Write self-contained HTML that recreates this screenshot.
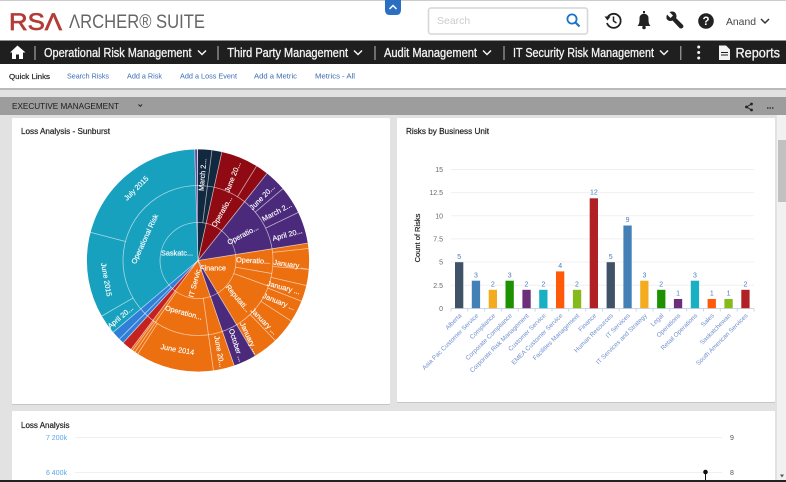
<!DOCTYPE html>
<html>
<head>
<meta charset="utf-8">
<style>
html,body{margin:0;padding:0;width:786px;height:482px;overflow:hidden;background:#e2e2e2}
svg{display:block;position:absolute;left:0;top:0;filter:blur(.3px);font-family:"Liberation Sans",sans-serif}
.nav{fill:#f4f4f4;stroke:#f4f4f4;stroke-width:.3;font-size:12.5px}
.ql{fill:#3a6db3;font-size:7.5px}
.s text{fill:#fff;stroke:#fff;stroke-width:.15;font-size:7.3px;text-anchor:middle}
.yl{fill:#666;font-size:7px;text-anchor:end}
.v{fill:#4a7cc4;font-size:7px;text-anchor:middle}
.xl{fill:#6f8fcf;font-size:6.3px;text-anchor:end}
.chev{fill:none;stroke:#f4f4f4;stroke-width:1.5}
.sep{stroke:#bbb;stroke-width:1}
.w circle{fill:none;stroke-width:111}
.thin path{stroke:#fff;stroke-opacity:.62;stroke-width:.8;fill:none}
.tt{fill:#222;stroke:#222;stroke-width:.2;font-size:8px}
</style>
</head>
<body>
<svg width="786" height="482" viewBox="0 0 786 482" xmlns="http://www.w3.org/2000/svg">
<!-- header -->
<rect x="0" y="0" width="786" height="41" fill="#fff"/>
<rect x="0" y="0" width="786" height="1" fill="#ccc"/>
<text x="9" y="30" font-size="24" fill="#b23c37" stroke="#b23c37" stroke-width=".7" textLength="53" lengthAdjust="spacingAndGlyphs">RSΛ</text>
<text x="69" y="28" font-size="19" fill="#666" textLength="136" lengthAdjust="spacingAndGlyphs">ΛRCHER® SUITE</text>
<path d="M385 0h16v10q0 5-5 5h-6q-5 0-5-5z" fill="#2b6fc2"/>
<path d="M389.500 9l3.500-3.500 3.500 3.500" fill="none" stroke="#fff" stroke-width="1.500"/>
<rect x="428.500" y="8" width="159" height="26" rx="2.500" fill="#fff" stroke="#d6d6d6" stroke-width="1.500"/>
<text x="437" y="24" font-size="10.500" fill="#ccc">Search</text>
<circle cx="572" cy="19" r="4.600" fill="none" stroke="#1b72c6" stroke-width="1.800"/>
<path d="M575.500 22.500l4 4" stroke="#1b72c6" stroke-width="2.200"/>
<!-- history -->
<path d="M607.500 17.500A7 7 0 1 1 607 23" fill="none" stroke="#222" stroke-width="1.800"/>
<path d="M604.500 16.500h6l-3 4z" fill="#222"/>
<path d="M613.500 16.500v4.500l3 2" fill="none" stroke="#222" stroke-width="1.500"/>
<!-- bell -->
<path d="M637.500 26q2-2 2-6v-2q0-3.500 4.500-4.500 4.500 1 4.500 4.500v2q0 4 2 6z" fill="#222"/>
<path d="M644 13v-2" stroke="#222" stroke-width="2"/>
<circle cx="644" cy="27.500" r="1.800" fill="#222"/>
<!-- wrench -->
<path d="M667 14.500l3.500 3.500 2.500-2.500-3.500-3.500q5-1.500 6.500 2 1 2.500 0 4l7 7q1 2-.5 3t-3 0l-7-7.500q-2 1-4.200 0-3-1.500-1.300-6z" fill="#222"/>
<!-- help -->
<circle cx="706" cy="21" r="7.800" fill="#222"/>
<text x="706" y="25" font-size="11.500" font-weight="bold" fill="#fff" text-anchor="middle">?</text>
<text x="726" y="25" font-size="10.500" fill="#444" textLength="30" lengthAdjust="spacingAndGlyphs">Anand</text>
<path d="M761 19l4 4 4-4" fill="none" stroke="#333" stroke-width="1.500"/>
<!-- nav -->
<rect x="0" y="40.500" width="786" height="23.500" fill="#1f1f1f"/>
<path d="M10 52.500L17.500 45.500 25.500 52.500h-2.500v6.500h-4v-4.500h-3v4.500h-4v-6.500z" fill="#fff"/>
<path class="sep" d="M35 46v14M218 46v14M375 46v14M504 46v14M680.800 46v14"/>
<text class="nav" x="44" y="57" textLength="147.500" lengthAdjust="spacingAndGlyphs">Operational Risk Management</text>
<path class="chev" d="M198 50.500l4 4 4-4"/>
<text class="nav" x="227.300" y="57" textLength="120.700" lengthAdjust="spacingAndGlyphs">Third Party Management</text>
<path class="chev" d="M354 50.500l4 4 4-4"/>
<text class="nav" x="384" y="57" textLength="93" lengthAdjust="spacingAndGlyphs">Audit Management</text>
<path class="chev" d="M483 50.500l4 4 4-4"/>
<text class="nav" x="513" y="57" textLength="141" lengthAdjust="spacingAndGlyphs">IT Security Risk Management</text>
<path class="chev" d="M660 50.500l4 4 4-4"/>
<circle cx="698.700" cy="47" r="1.500" fill="#f4f4f4"/><circle cx="698.700" cy="52.500" r="1.500" fill="#f4f4f4"/><circle cx="698.700" cy="58" r="1.500" fill="#f4f4f4"/>
<path d="M719 45.500h7l4 4v10.500h-11z" fill="#f4f4f4"/>
<path d="M721 52.500h7M721 55h7" stroke="#1f1f1f" stroke-width="1"/>
<text class="nav" x="735.500" y="57.500" style="font-size:13.500px" textLength="44.500" lengthAdjust="spacingAndGlyphs">Reports</text>
<!-- quick links -->
<rect x="0" y="64" width="786" height="24" fill="#fff"/>
<rect x="0" y="88" width="786" height="2" fill="#b9b9b9"/>
<text x="9" y="79" class="tt" style="font-size:7.500px" textLength="41" lengthAdjust="spacingAndGlyphs">Quick Links</text>
<text class="ql" x="67" y="78.500" textLength="42" lengthAdjust="spacingAndGlyphs">Search Risks</text>
<text class="ql" x="127" y="78.500" textLength="35" lengthAdjust="spacingAndGlyphs">Add a Risk</text>
<text class="ql" x="180" y="78.500" textLength="57" lengthAdjust="spacingAndGlyphs">Add a Loss Event</text>
<text class="ql" x="254" y="78.500" textLength="43" lengthAdjust="spacingAndGlyphs">Add a Metric</text>
<text class="ql" x="315" y="78.500" textLength="40" lengthAdjust="spacingAndGlyphs">Metrics - All</text>
<!-- exec bar -->
<rect x="0" y="97" width="786" height="18" fill="#9d9d9d"/>
<text x="12" y="109" font-size="8.500" fill="#1c1c1c" textLength="107" lengthAdjust="spacingAndGlyphs">EXECUTIVE MANAGEMENT</text>
<path d="M138.500 104.500l1.800 1.800 1.800-1.800" fill="none" stroke="#222" stroke-width="1"/>
<path d="M751.500 104l-5 3 5 3" fill="none" stroke="#222" stroke-width="1"/>
<circle cx="751.500" cy="104" r="1.400" fill="#222"/><circle cx="746.500" cy="107" r="1.400" fill="#222"/><circle cx="751.500" cy="110" r="1.400" fill="#222"/>
<path d="M767 108h7" stroke="#222" stroke-width="1.300" stroke-dasharray="1.500 1"/>
<!-- scrollbar -->
<rect x="777" y="115" width="9" height="367" fill="#f1f1f1"/>
<rect x="778" y="140" width="8" height="62" fill="#c1c1c1"/>
<path d="M780 474.500h4l-2 3z" fill="#555"/>
<!-- cards -->
<rect x="12" y="119" width="378" height="286" rx="1" fill="#c6c6c6"/>
<rect x="12" y="118" width="378" height="286" rx="1" fill="#fff"/>
<rect x="397" y="119" width="378" height="284" rx="1" fill="#c6c6c6"/>
<rect x="397" y="118" width="378" height="284" rx="1" fill="#fff"/>
<rect x="12" y="411" width="763" height="71" rx="1" fill="#fff"/>
<text class="tt" x="21" y="134" textLength="89" lengthAdjust="spacingAndGlyphs">Loss Analysis - Sunburst</text>
<text class="tt" x="406" y="134" textLength="83" lengthAdjust="spacingAndGlyphs">Risks by Business Unit</text>
<text class="tt" x="21" y="428" textLength="48.500" lengthAdjust="spacingAndGlyphs">Loss Analysis</text>
<!-- sunburst -->
<g transform="translate(198 260.500)">
<g class="w" transform="rotate(-90)">
<circle r="55.600" pathLength="360" stroke="#18a0bf" stroke-dasharray="128.500 360" stroke-dashoffset="-229.800"/>
<circle r="55.600" pathLength="360" stroke="#5a4c9c" stroke-dasharray="1.500 360" stroke-dashoffset="-358.300"/>
<circle r="55.600" pathLength="360" stroke="#12283f" stroke-dasharray="12.400 360" stroke-dashoffset="0"/>
<circle r="55.600" pathLength="360" stroke="#8f0a12" stroke-dasharray="26 360" stroke-dashoffset="-12.400"/>
<circle r="55.600" pathLength="360" stroke="#4b2a7b" stroke-dasharray="42.600 360" stroke-dashoffset="-38.400"/>
<circle r="55.600" pathLength="360" stroke="#ec6f10" stroke-dasharray="68 360" stroke-dashoffset="-81"/>
<circle r="55.600" pathLength="360" stroke="#4b2a7b" stroke-dasharray="12 360" stroke-dashoffset="-149"/>
<circle r="55.600" pathLength="360" stroke="#ec6f10" stroke-dasharray="56 360" stroke-dashoffset="-161"/>
<circle r="55.600" pathLength="360" stroke="#c4211f" stroke-dasharray="5.300 360" stroke-dashoffset="-217"/>
<circle r="55.600" pathLength="360" stroke="#2f7ed8" stroke-dasharray="7.500 360" stroke-dashoffset="-222.300"/>
</g>
<g class="thin">
<circle r="38" fill="none" stroke="#fff" stroke-opacity=".6" stroke-width=".8"/>
<circle r="75" fill="none" stroke="#fff" stroke-opacity=".6" stroke-width=".8"/>
<path d="M0 0V-111" transform="rotate(229.800)"/>
<path d="M0 0V-111" transform="rotate(358.300)"/>
<path d="M0 0V-111" transform="rotate(12.400)"/>
<path d="M0 0V-111" transform="rotate(38.400)"/>
<path d="M0 0V-111" transform="rotate(81)"/>
<path d="M0 0V-111" transform="rotate(149)"/>
<path d="M0 0V-111" transform="rotate(161)"/>
<path d="M0 0V-111" transform="rotate(217)"/>
<path d="M0 0V-111" transform="rotate(222.300)"/>
<path d="M0 -38V-111" transform="rotate(225)"/>
<path d="M0 -38V-111" transform="rotate(7.200)"/>
<path d="M0 -38V-111" transform="rotate(172)"/>
<path d="M0 -38V-111" transform="rotate(214.500)"/>
<path d="M0 -38V-75" transform="rotate(100)"/>
<path d="M0 -38V-75" transform="rotate(110)"/>
<path d="M0 -75V-111" transform="rotate(284.700)"/>
<path d="M0 -75V-111" transform="rotate(240)"/>
<path d="M0 -75V-111" transform="rotate(31.800)"/>
<path d="M0 -75V-111" transform="rotate(49.800)"/>
<path d="M0 -75V-111" transform="rotate(64.400)"/>
<path d="M0 -75V-111" transform="rotate(83.800)"/>
<path d="M0 -75V-111" transform="rotate(94.600)"/>
<path d="M0 -75V-111" transform="rotate(103)"/>
<path d="M0 -75V-111" transform="rotate(111.500)"/>
<path d="M0 -75V-111" transform="rotate(123)"/>
<path d="M0 -75V-111" transform="rotate(136)"/>
<path d="M0 -75V-111" transform="rotate(212.800)"/>
<path d="M0 -75V-111" transform="rotate(216)"/>
</g>
</g>
<g class="s">
<text transform="translate(138 190) rotate(-45)">July 2015</text>
<text transform="translate(147 240) rotate(-65)">Operational Risk</text>
<text transform="translate(177 255.500)">Saskatc...</text>
<text transform="translate(205 175) rotate(-85)">March 2...</text>
<text transform="translate(235 178) rotate(-68)">June 20...</text>
<text transform="translate(224 213) rotate(-60)">Operatio...</text>
<text transform="translate(264 199) rotate(-45)">June 20...</text>
<text transform="translate(278 214) rotate(-28)">March 2...</text>
<text transform="translate(288 237) rotate(-15)">April 20...</text>
<text transform="translate(244 237) rotate(-28)">Operatio...</text>
<text transform="translate(253 263) rotate(3)">Operatio...</text>
<text transform="translate(290 267) rotate(8)">January ...</text>
<text transform="translate(283 290) rotate(15)">January ...</text>
<text transform="translate(278 304) rotate(22)">January ...</text>
<text transform="translate(236 300) rotate(50)">Reputati...</text>
<text transform="translate(262 323) rotate(45)">January ...</text>
<text transform="translate(247 339) rotate(65)">January ...</text>
<text transform="translate(234 346) rotate(72)">October ...</text>
<text transform="translate(217 352) rotate(80)">June 20...</text>
<text transform="translate(197 284) rotate(-75)">IT Servic</text>
<text transform="translate(183 315) rotate(15)">Operation...</text>
<text transform="translate(177 352) rotate(10)">June 2014</text>
<text transform="translate(104 280) rotate(80)">June 2015</text>
<text transform="translate(122 319) rotate(-40)">April 20...</text>
<text transform="translate(213 270.500)">Finance</text>
</g>
<!-- bar chart -->
<g stroke="#f0f0f0" stroke-width="1">
<path d="M451 169.500H754M451 192.600H754M451 215.800H754M451 238.900H754M451 262H754M451 285.200H754"/>
</g>
<path d="M451 308.500H754" stroke="#ccd6eb" stroke-width="1"/>
<path d="M451 308.500v3M467.800 308.500v3M484.700 308.500v3M501.500 308.500v3M518.300 308.500v3M535.200 308.500v3M552 308.500v3M568.800 308.500v3M585.700 308.500v3M602.500 308.500v3M619.300 308.500v3M636.200 308.500v3M653 308.500v3M669.800 308.500v3M686.700 308.500v3M703.500 308.500v3M720.300 308.500v3M737.200 308.500v3M754 308.500v3" stroke="#ccd6eb" stroke-width="1"/>
<text class="yl" x="443" y="172">15</text>
<text class="yl" x="443" y="195">12.5</text>
<text class="yl" x="443" y="218.500">10</text>
<text class="yl" x="443" y="241.500">7.5</text>
<text class="yl" x="443" y="264.500">5</text>
<text class="yl" x="443" y="288">2.5</text>
<text class="yl" x="443" y="311">0</text>
<text class="tt" transform="translate(420 238) rotate(-90)" style="font-size:7.500px" text-anchor="middle">Count of Risks</text>
<rect x="455" y="262.200" width="8.300" height="46" fill="#3f5266"/>
<rect x="471.800" y="280.700" width="8.300" height="27.500" fill="#4380b5"/>
<rect x="488.700" y="289.800" width="8.300" height="18.400" fill="#f3ab20"/>
<rect x="505.500" y="280.700" width="8.300" height="27.500" fill="#1e9100"/>
<rect x="522.400" y="289.800" width="8.300" height="18.400" fill="#6c2f79"/>
<rect x="539.200" y="289.800" width="8.300" height="18.400" fill="#19b0c3"/>
<rect x="556" y="271.400" width="8.300" height="36.800" fill="#ff5a0a"/>
<rect x="572.900" y="289.800" width="8.300" height="18.400" fill="#86b91a"/>
<rect x="589.700" y="198.300" width="8.300" height="110" fill="#b02025"/>
<rect x="606.600" y="262.200" width="8.300" height="46" fill="#3f5266"/>
<rect x="623.400" y="225.500" width="8.300" height="82.700" fill="#4380b5"/>
<rect x="640.200" y="280.700" width="8.300" height="27.500" fill="#f3ab20"/>
<rect x="657.100" y="289.800" width="8.300" height="18.400" fill="#1e9100"/>
<rect x="673.900" y="299" width="8.300" height="9.200" fill="#6c2f79"/>
<rect x="690.800" y="280.700" width="8.300" height="27.500" fill="#19b0c3"/>
<rect x="707.600" y="299" width="8.300" height="9.200" fill="#ff5a0a"/>
<rect x="724.400" y="299" width="8.300" height="9.200" fill="#86b91a"/>
<rect x="741.300" y="289.800" width="8.300" height="18.400" fill="#b02025"/>
<g>
<text class="v" x="459.200" y="259">5</text>
<text class="v" x="476" y="277.500">3</text>
<text class="v" x="492.800" y="286.500">2</text>
<text class="v" x="509.700" y="277.500">3</text>
<text class="v" x="526.500" y="286.500">2</text>
<text class="v" x="543.400" y="286.500">2</text>
<text class="v" x="560.200" y="268">4</text>
<text class="v" x="577" y="286.500">2</text>
<text class="v" x="593.900" y="194.500">12</text>
<text class="v" x="610.700" y="259">5</text>
<text class="v" x="627.600" y="222">9</text>
<text class="v" x="644.400" y="277.500">3</text>
<text class="v" x="661.200" y="286.500">2</text>
<text class="v" x="678.100" y="295.500">1</text>
<text class="v" x="694.900" y="277.500">3</text>
<text class="v" x="711.800" y="295.500">1</text>
<text class="v" x="728.600" y="295.500">1</text>
<text class="v" x="745.400" y="286.500">2</text>
</g>
<g>
<text class="xl" transform="translate(462 316) rotate(-45)">Alberta</text>
<text class="xl" transform="translate(478.800 316) rotate(-45)">Asia Pac Customer Service</text>
<text class="xl" transform="translate(495.700 316) rotate(-45)">Compliance</text>
<text class="xl" transform="translate(512.500 316) rotate(-45)">Corporate Compliance</text>
<text class="xl" transform="translate(529.300 316) rotate(-45)">Corporate Risk Management</text>
<text class="xl" transform="translate(546.200 316) rotate(-45)">Customer Service</text>
<text class="xl" transform="translate(563 316) rotate(-45)">EMEA Customer Service</text>
<text class="xl" transform="translate(579.800 316) rotate(-45)">Facilities Management</text>
<text class="xl" transform="translate(596.700 316) rotate(-45)">Finance</text>
<text class="xl" transform="translate(613.500 316) rotate(-45)">Human Resources</text>
<text class="xl" transform="translate(630.300 316) rotate(-45)">IT Services</text>
<text class="xl" transform="translate(647.200 316) rotate(-45)">IT Services and Strategy</text>
<text class="xl" transform="translate(664 316) rotate(-45)">Legal</text>
<text class="xl" transform="translate(680.800 316) rotate(-45)">Operations</text>
<text class="xl" transform="translate(697.700 316) rotate(-45)">Retail Operations</text>
<text class="xl" transform="translate(714.500 316) rotate(-45)">Sales</text>
<text class="xl" transform="translate(731.300 316) rotate(-45)">Saskatchewan</text>
<text class="xl" transform="translate(748.200 316) rotate(-45)">South American Services</text>
</g>
<!-- loss analysis chart -->
<path d="M75 437.500H722M75 472.500H722" stroke="#f0f0f0" stroke-width="1"/>
<text x="67" y="440" font-size="7" fill="#5aa5ee" text-anchor="end">7 200k</text>
<text x="67" y="475" font-size="7" fill="#5aa5ee" text-anchor="end">6 400k</text>
<text x="732" y="440" font-size="7" fill="#555" text-anchor="middle">9</text>
<text x="732" y="475" font-size="7" fill="#555" text-anchor="middle">8</text>
<circle cx="705.500" cy="472" r="2.300" fill="#111"/>
<path d="M705.500 472V480" stroke="#111" stroke-width="1"/>
<rect x="0" y="480" width="786" height="2" fill="#222"/>
</svg>
</body>
</html>
